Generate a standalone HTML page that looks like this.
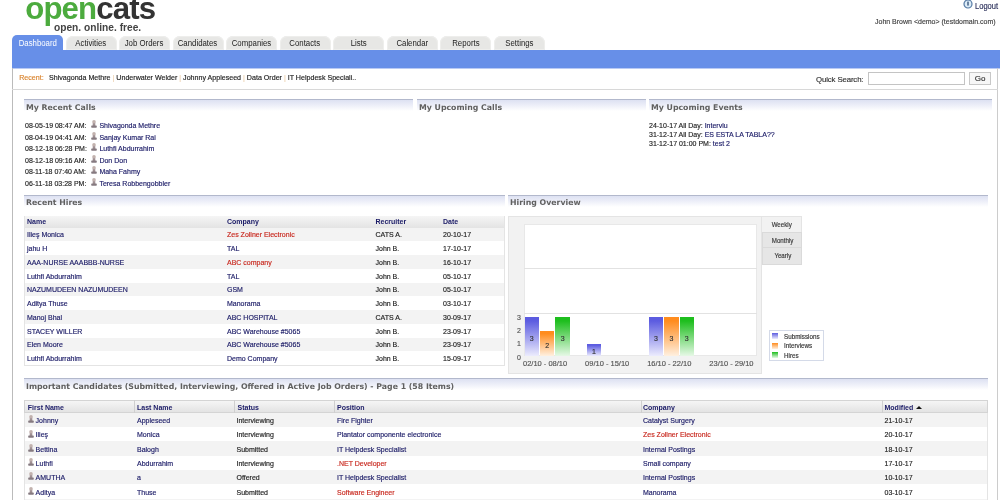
<!DOCTYPE html>
<html><head><meta charset="utf-8"><title>OpenCATS - Dashboard</title>
<style>
html,body{margin:0;padding:0;background:#fff;}
body{-webkit-text-stroke:.15px;will-change:transform;width:1000px;height:500px;overflow:hidden;position:relative;font-family:"Liberation Sans",sans-serif;font-size:7px;color:#222;}
.a{position:absolute;white-space:nowrap;}
.t{position:absolute;white-space:nowrap;line-height:10px;height:10px;}
#logo{left:25.2px;top:-12.3px;font-size:31.2px;font-weight:bold;letter-spacing:-0.85px;line-height:42px;color:#333;}
#logo b{color:#4cab3e;}
#logo,#tag,.sec span,.hd,.tab{-webkit-text-stroke:0;}
#tag{left:54px;top:21.5px;font-size:10.2px;font-weight:bold;line-height:12px;color:#444;}
#logout{left:975.2px;top:0.9px;font-size:8.6px;color:#2a2f5a;transform:scaleX(.88);transform-origin:0 0;}
#user{left:875px;top:16.6px;font-size:7px;color:#444;}
.tab{position:absolute;top:35.5px;height:14.5px;width:51px;background:#e7e7e5;border-radius:7px 7px 0 0;text-align:center;line-height:15.6px;font-size:8.5px;color:#222;box-shadow:inset 0 0 0 1px #eeeeec;}
.tab.on{background:#678fe8;color:#fff;box-shadow:none;top:35px;height:16px;line-height:16.6px;border-radius:5px 5px 0 0;}
.tab span{display:inline-block;transform:scaleX(.92);}
#bar{left:12px;top:49.5px;width:988px;height:18.5px;background:#678fe8;border-bottom:1px solid #b9caf4;}
#box{left:12px;top:68px;width:986px;height:440px;border-left:1px solid #bbb;border-right:1px solid #ccc;box-sizing:border-box;}
#recent{left:12px;top:68px;width:986px;height:22px;border-bottom:1px solid #d8d8d8;box-sizing:border-box;}
.sec{position:absolute;height:13px;border-top:1px solid #b2b8cc;background:linear-gradient(#dde1f2,#eceef8 5px,#fff 11px);}
.sec span{position:absolute;left:2px;top:2.2px;font-family:"DejaVu Sans",sans-serif;font-weight:bold;font-size:7.8px;line-height:12px;color:#606060;white-space:nowrap;}
a,.l{color:#1a1a66;text-decoration:none;}
.r{color:#c8281e;}
.sp{font-style:normal;color:#ecd0b0;}
.ic{display:block;}
.th{background:linear-gradient(#f5f5f5,#e3e3e3);}
.hd{font-weight:bold;color:#1a1a66;}
.odd{background:#f3f3f3;}
.ct{text-align:center;font-size:7.2px;line-height:15px;color:#333;}
.ct span{display:inline-block;transform:scaleX(.86);}
.bar{text-align:center;}
.bar span{position:absolute;left:0;right:0;top:50%;margin-top:-2.8px;line-height:10px;font-size:7px;color:#333;}
.cx{font-size:7.5px;color:#555;}
.cy{font-size:7px;color:#555;width:9px;text-align:right;}
.cl{font-size:6.6px;color:#333;transform:scaleX(.95);transform-origin:0 50%;}
</style></head><body>
<div class="a" id="logo"><b>open</b>cats</div>
<div class="a" id="tag">open. online. free.</div>
<svg class="a" style="left:962.6px;top:-1px" width="10" height="10" viewBox="0 0 10 10"><circle cx="5" cy="5" r="4" fill="#dcecf8" stroke="#557aa4" stroke-width="1.2"/><rect x="4.35" y="2.6" width="1.3" height="4" fill="#2a4a70"/></svg>
<div class="t" id="logout">Logout</div>
<div class="t" id="user">John Brown &lt;demo&gt; (testdomain.com)</div>
<div class="a" id="bar"></div>
<div class="tab on" style="left:12.0px"><span>Dashboard</span></div>
<div class="tab" style="left:65.5px"><span>Activities</span></div>
<div class="tab" style="left:119.0px"><span>Job Orders</span></div>
<div class="tab" style="left:172.5px"><span>Candidates</span></div>
<div class="tab" style="left:226.0px"><span>Companies</span></div>
<div class="tab" style="left:279.5px"><span>Contacts</span></div>
<div class="tab" style="left:333.0px"><span>Lists</span></div>
<div class="tab" style="left:386.5px"><span>Calendar</span></div>
<div class="tab" style="left:440.0px"><span>Reports</span></div>
<div class="tab" style="left:493.5px"><span>Settings</span></div>
<div class="a" id="box"></div>
<div class="a" id="recent"></div>
<div class="sec" style="left:24px;top:99px;width:389px"><span>My Recent Calls</span></div>
<div class="sec" style="left:417px;top:99px;width:229px"><span>My Upcoming Calls</span></div>
<div class="sec" style="left:649px;top:99px;width:343px"><span>My Upcoming Events</span></div>
<div class="sec" style="left:24px;top:194.6px;width:481px"><span style="top:1.7px">Recent Hires</span></div>
<div class="sec" style="left:508px;top:194.6px;width:480px"><span style="top:1.7px">Hiring Overview</span></div>
<div class="sec" style="left:24px;top:377.6px;width:964px"><span>Important Candidates (Submitted, Interviewing, Offered in Active Job Orders) - Page 1 (58 Items)</span></div>
<div class="t" style="left:19.2px;top:69.6px;font-size:7.1px;line-height:16px;height:16px"><span style="color:#d9822b">Recent:</span>&nbsp;&thinsp; Shivagonda Methre <i class="sp">|</i> Underwater Welder <i class="sp">|</i> Johnny Appleseed <i class="sp">|</i> Data Order <i class="sp">|</i> IT Helpdesk Speciali..</div>
<div class="t" style="left:816px;top:74.6px;font-size:7.8px;letter-spacing:-.12px;color:#333">Quick Search:</div>
<div class="a" style="left:868px;top:72px;width:97px;height:13px;box-sizing:border-box;border:1px solid #c4c4c4;background:#fff"></div>
<div class="a" style="left:969px;top:72px;width:22px;height:13px;box-sizing:border-box;border:1px solid #c8c8c8;background:#f7f7f7;text-align:center;font-size:8px;line-height:11px;color:#333">Go</div>
<div class="t" style="left:25px;top:121.00px">08-05-19 08:47 AM:</div>
<div class="a" style="left:91px;top:120.20px"><svg class="ic" width="6" height="8" viewBox="0 0 6 8"><circle cx="3" cy="1.9" r="1.8" fill="#c2b2ae"/><rect x="1.7" y="3.2" width="2.6" height="2.8" fill="#a09092"/><rect x="0.2" y="5.6" width="5.6" height="2.1" rx=".7" fill="#857a80"/></svg></div>
<div class="t l" style="left:99.4px;top:121.00px">Shivagonda Methre</div>
<div class="t" style="left:25px;top:132.52px">08-04-19 04:41 AM:</div>
<div class="a" style="left:91px;top:131.72px"><svg class="ic" width="6" height="8" viewBox="0 0 6 8"><circle cx="3" cy="1.9" r="1.8" fill="#c2b2ae"/><rect x="1.7" y="3.2" width="2.6" height="2.8" fill="#a09092"/><rect x="0.2" y="5.6" width="5.6" height="2.1" rx=".7" fill="#857a80"/></svg></div>
<div class="t l" style="left:99.4px;top:132.52px">Sanjay Kumar Rai</div>
<div class="t" style="left:25px;top:144.04px">08-12-18 06:28 PM:</div>
<div class="a" style="left:91px;top:143.24px"><svg class="ic" width="6" height="8" viewBox="0 0 6 8"><circle cx="3" cy="1.9" r="1.8" fill="#c2b2ae"/><rect x="1.7" y="3.2" width="2.6" height="2.8" fill="#a09092"/><rect x="0.2" y="5.6" width="5.6" height="2.1" rx=".7" fill="#857a80"/></svg></div>
<div class="t l" style="left:99.4px;top:144.04px">Luthfi Abdurrahim</div>
<div class="t" style="left:25px;top:155.56px">08-12-18 09:16 AM:</div>
<div class="a" style="left:91px;top:154.76px"><svg class="ic" width="6" height="8" viewBox="0 0 6 8"><circle cx="3" cy="1.9" r="1.8" fill="#c2b2ae"/><rect x="1.7" y="3.2" width="2.6" height="2.8" fill="#a09092"/><rect x="0.2" y="5.6" width="5.6" height="2.1" rx=".7" fill="#857a80"/></svg></div>
<div class="t l" style="left:99.4px;top:155.56px">Don Don</div>
<div class="t" style="left:25px;top:167.08px">08-11-18 07:40 AM:</div>
<div class="a" style="left:91px;top:166.28px"><svg class="ic" width="6" height="8" viewBox="0 0 6 8"><circle cx="3" cy="1.9" r="1.8" fill="#c2b2ae"/><rect x="1.7" y="3.2" width="2.6" height="2.8" fill="#a09092"/><rect x="0.2" y="5.6" width="5.6" height="2.1" rx=".7" fill="#857a80"/></svg></div>
<div class="t l" style="left:99.4px;top:167.08px">Maha Fahmy</div>
<div class="t" style="left:25px;top:178.60px">06-11-18 03:28 PM:</div>
<div class="a" style="left:91px;top:177.80px"><svg class="ic" width="6" height="8" viewBox="0 0 6 8"><circle cx="3" cy="1.9" r="1.8" fill="#c2b2ae"/><rect x="1.7" y="3.2" width="2.6" height="2.8" fill="#a09092"/><rect x="0.2" y="5.6" width="5.6" height="2.1" rx=".7" fill="#857a80"/></svg></div>
<div class="t l" style="left:99.4px;top:178.60px">Teresa Robbengobbler</div>
<div class="t" style="left:649px;top:121.00px">24-10-17 All Day: <span class="l">Interviu</span></div>
<div class="t" style="left:649px;top:130.20px">31-12-17 All Day: <span class="l">ES ESTA LA TABLA??</span></div>
<div class="t" style="left:649px;top:139.40px">31-12-17 01:00 PM: <span class="l">test 2</span></div>
<div class="a th" style="left:24px;top:215.5px;width:481px;height:12px"></div>
<div class="t hd" style="left:27px;top:217.00px">Name</div>
<div class="t hd" style="left:227px;top:217.00px">Company</div>
<div class="t hd" style="left:375.5px;top:217.00px">Recruiter</div>
<div class="t hd" style="left:443px;top:217.00px">Date</div>
<div class="a odd" style="left:24px;top:227.50px;width:481px;height:13.75px"></div>
<div class="t l" style="left:27px;top:230.30px">Ilieş Monica</div>
<div class="t r" style="left:227px;top:230.30px">Zes Zollner Electronic</div>
<div class="t" style="left:375.5px;top:230.30px">CATS A.</div>
<div class="t" style="left:443px;top:230.30px">20-10-17</div>
<div class="t l" style="left:27px;top:244.05px">jahu H</div>
<div class="t l" style="left:227px;top:244.05px">TAL</div>
<div class="t" style="left:375.5px;top:244.05px">John B.</div>
<div class="t" style="left:443px;top:244.05px">17-10-17</div>
<div class="a odd" style="left:24px;top:255.00px;width:481px;height:13.75px"></div>
<div class="t l" style="left:27px;top:257.80px">AAA-NURSE AAABBB-NURSE</div>
<div class="t r" style="left:227px;top:257.80px">ABC company</div>
<div class="t" style="left:375.5px;top:257.80px">John B.</div>
<div class="t" style="left:443px;top:257.80px">16-10-17</div>
<div class="t l" style="left:27px;top:271.55px">Luthfi Abdurrahim</div>
<div class="t l" style="left:227px;top:271.55px">TAL</div>
<div class="t" style="left:375.5px;top:271.55px">John B.</div>
<div class="t" style="left:443px;top:271.55px">05-10-17</div>
<div class="a odd" style="left:24px;top:282.50px;width:481px;height:13.75px"></div>
<div class="t l" style="left:27px;top:285.30px">NAZUMUDEEN NAZUMUDEEN</div>
<div class="t l" style="left:227px;top:285.30px">GSM</div>
<div class="t" style="left:375.5px;top:285.30px">John B.</div>
<div class="t" style="left:443px;top:285.30px">05-10-17</div>
<div class="t l" style="left:27px;top:299.05px">Aditya Thuse</div>
<div class="t l" style="left:227px;top:299.05px">Manorama</div>
<div class="t" style="left:375.5px;top:299.05px">John B.</div>
<div class="t" style="left:443px;top:299.05px">03-10-17</div>
<div class="a odd" style="left:24px;top:310.00px;width:481px;height:13.75px"></div>
<div class="t l" style="left:27px;top:312.80px">Manoj Bhal</div>
<div class="t l" style="left:227px;top:312.80px">ABC HOSPITAL</div>
<div class="t" style="left:375.5px;top:312.80px">CATS A.</div>
<div class="t" style="left:443px;top:312.80px">30-09-17</div>
<div class="t l" style="left:27px;top:326.55px">STACEY WILLER</div>
<div class="t l" style="left:227px;top:326.55px">ABC Warehouse #5065</div>
<div class="t" style="left:375.5px;top:326.55px">John B.</div>
<div class="t" style="left:443px;top:326.55px">23-09-17</div>
<div class="a odd" style="left:24px;top:337.50px;width:481px;height:13.75px"></div>
<div class="t l" style="left:27px;top:340.30px">Elen Moore</div>
<div class="t l" style="left:227px;top:340.30px">ABC Warehouse #5065</div>
<div class="t" style="left:375.5px;top:340.30px">John B.</div>
<div class="t" style="left:443px;top:340.30px">23-09-17</div>
<div class="t l" style="left:27px;top:354.05px">Luthfi Abdurrahim</div>
<div class="t l" style="left:227px;top:354.05px">Demo Company</div>
<div class="t" style="left:375.5px;top:354.05px">John B.</div>
<div class="t" style="left:443px;top:354.05px">15-09-17</div>
<div class="a" style="left:24px;top:215.5px;width:481px;height:150px;box-sizing:border-box;border:1px solid #e4e4e4;border-top:0"></div>
<div class="a th" style="left:24px;top:400px;width:964px;height:13px;box-sizing:border-box;border:1px solid #d4d4d4"></div>
<div class="t hd" style="left:27.8px;top:402.50px">First Name</div>
<div class="t hd" style="left:137px;top:402.50px">Last Name</div>
<div class="t hd" style="left:237.5px;top:402.50px">Status</div>
<div class="t hd" style="left:337px;top:402.50px">Position</div>
<div class="t hd" style="left:643px;top:402.50px">Company</div>
<div class="t hd" style="left:884.5px;top:402.50px">Modified</div>
<div class="a" style="left:134px;top:400px;width:1px;height:13px;background:#cfcfcf"></div>
<div class="a" style="left:234px;top:400px;width:1px;height:13px;background:#cfcfcf"></div>
<div class="a" style="left:334px;top:400px;width:1px;height:13px;background:#cfcfcf"></div>
<div class="a" style="left:640.5px;top:400px;width:1px;height:13px;background:#cfcfcf"></div>
<div class="a" style="left:881.5px;top:400px;width:1px;height:13px;background:#cfcfcf"></div>
<div class="a" style="left:915.5px;top:405.8px;width:0;height:0;border-left:3.1px solid transparent;border-right:3.1px solid transparent;border-bottom:3.6px solid #111"></div>
<div class="a odd" style="left:24px;top:412.80px;width:964px;height:14.3px"></div>
<div class="a" style="left:28px;top:415.20px"><svg class="ic" width="6" height="8" viewBox="0 0 6 8"><circle cx="3" cy="1.9" r="1.8" fill="#c2b2ae"/><rect x="1.7" y="3.2" width="2.6" height="2.8" fill="#a09092"/><rect x="0.2" y="5.6" width="5.6" height="2.1" rx=".7" fill="#857a80"/></svg></div>
<div class="t l" style="left:35.6px;top:416.00px">Johnny</div>
<div class="t l" style="left:137px;top:416.00px">Appleseed</div>
<div class="t" style="left:236.5px;top:416.00px">Interviewing</div>
<div class="t l" style="left:337px;top:416.00px">Fire Fighter</div>
<div class="t l" style="left:643px;top:416.00px">Catalyst Surgery</div>
<div class="t" style="left:884.5px;top:416.00px">21-10-17</div>
<div class="a" style="left:28px;top:429.50px"><svg class="ic" width="6" height="8" viewBox="0 0 6 8"><circle cx="3" cy="1.9" r="1.8" fill="#c2b2ae"/><rect x="1.7" y="3.2" width="2.6" height="2.8" fill="#a09092"/><rect x="0.2" y="5.6" width="5.6" height="2.1" rx=".7" fill="#857a80"/></svg></div>
<div class="t l" style="left:35.6px;top:430.30px">Ilieş</div>
<div class="t l" style="left:137px;top:430.30px">Monica</div>
<div class="t" style="left:236.5px;top:430.30px">Interviewing</div>
<div class="t l" style="left:337px;top:430.30px">Plantator componente electronice</div>
<div class="t r" style="left:643px;top:430.30px">Zes Zollner Electronic</div>
<div class="t" style="left:884.5px;top:430.30px">20-10-17</div>
<div class="a odd" style="left:24px;top:441.40px;width:964px;height:14.3px"></div>
<div class="a" style="left:28px;top:443.80px"><svg class="ic" width="6" height="8" viewBox="0 0 6 8"><circle cx="3" cy="1.9" r="1.8" fill="#c2b2ae"/><rect x="1.7" y="3.2" width="2.6" height="2.8" fill="#a09092"/><rect x="0.2" y="5.6" width="5.6" height="2.1" rx=".7" fill="#857a80"/></svg></div>
<div class="t l" style="left:35.6px;top:444.60px">Bettina</div>
<div class="t l" style="left:137px;top:444.60px">Balogh</div>
<div class="t" style="left:236.5px;top:444.60px">Submitted</div>
<div class="t l" style="left:337px;top:444.60px">IT Helpdesk Specialist</div>
<div class="t l" style="left:643px;top:444.60px">Internal Postings</div>
<div class="t" style="left:884.5px;top:444.60px">18-10-17</div>
<div class="a" style="left:28px;top:458.10px"><svg class="ic" width="6" height="8" viewBox="0 0 6 8"><circle cx="3" cy="1.9" r="1.8" fill="#c2b2ae"/><rect x="1.7" y="3.2" width="2.6" height="2.8" fill="#a09092"/><rect x="0.2" y="5.6" width="5.6" height="2.1" rx=".7" fill="#857a80"/></svg></div>
<div class="t l" style="left:35.6px;top:458.90px">Luthfi</div>
<div class="t l" style="left:137px;top:458.90px">Abdurrahim</div>
<div class="t" style="left:236.5px;top:458.90px">Interviewing</div>
<div class="t r" style="left:337px;top:458.90px">.NET Developer</div>
<div class="t l" style="left:643px;top:458.90px">Small company</div>
<div class="t" style="left:884.5px;top:458.90px">17-10-17</div>
<div class="a odd" style="left:24px;top:470.00px;width:964px;height:14.3px"></div>
<div class="a" style="left:28px;top:472.40px"><svg class="ic" width="6" height="8" viewBox="0 0 6 8"><circle cx="3" cy="1.9" r="1.8" fill="#c2b2ae"/><rect x="1.7" y="3.2" width="2.6" height="2.8" fill="#a09092"/><rect x="0.2" y="5.6" width="5.6" height="2.1" rx=".7" fill="#857a80"/></svg></div>
<div class="t l" style="left:35.6px;top:473.20px">AMUTHA</div>
<div class="t l" style="left:137px;top:473.20px">a</div>
<div class="t" style="left:236.5px;top:473.20px">Offered</div>
<div class="t l" style="left:337px;top:473.20px">IT Helpdesk Specialist</div>
<div class="t l" style="left:643px;top:473.20px">Internal Postings</div>
<div class="t" style="left:884.5px;top:473.20px">10-10-17</div>
<div class="a" style="left:28px;top:486.70px"><svg class="ic" width="6" height="8" viewBox="0 0 6 8"><circle cx="3" cy="1.9" r="1.8" fill="#c2b2ae"/><rect x="1.7" y="3.2" width="2.6" height="2.8" fill="#a09092"/><rect x="0.2" y="5.6" width="5.6" height="2.1" rx=".7" fill="#857a80"/></svg></div>
<div class="t l" style="left:35.6px;top:487.50px">Aditya</div>
<div class="t l" style="left:137px;top:487.50px">Thuse</div>
<div class="t" style="left:236.5px;top:487.50px">Submitted</div>
<div class="t r" style="left:337px;top:487.50px">Software Engineer</div>
<div class="t l" style="left:643px;top:487.50px">Manorama</div>
<div class="t" style="left:884.5px;top:487.50px">03-10-17</div>
<div class="a odd" style="left:24px;top:498.6px;width:964px;height:14.3px"></div>
<div class="a" style="left:24px;top:413px;width:964px;height:100px;box-sizing:border-box;border-left:1px solid #e4e4e4;border-right:1px solid #e4e4e4"></div>
<div class="a" style="left:507.6px;top:215.6px;width:254.8px;height:158px;box-sizing:border-box;background:#f2f2f2;border:1px solid #e4e4e4"></div>
<div class="a" style="left:524.4px;top:223.6px;width:232.2px;height:132.4px;background:#fff;box-sizing:border-box;border:1px solid #e8e8e8"></div>
<div class="a" style="left:524.4px;top:268px;width:232.2px;height:1px;background:#e2e2e2"></div>
<div class="a" style="left:524.4px;top:313px;width:232.2px;height:1px;background:#e2e2e2"></div>
<div class="a ct" style="left:762.4px;top:215.6px;width:40px;height:16.4px;background:#f2f2f2;border:1px solid #e4e4e4;border-left:0;border-bottom:0;box-sizing:border-box"><span>Weekly</span></div>
<div class="a ct" style="left:762.4px;top:232px;width:40px;height:16.4px;background:#e6e6e6;border:1px solid #dadada;box-sizing:border-box"><span>Monthly</span></div>
<div class="a ct" style="left:762.4px;top:248.4px;width:40px;height:16.2px;background:#e6e6e6;border:1px solid #dadada;border-top:0;box-sizing:border-box;line-height:16.5px"><span>Yearly</span></div>
<div class="a bar" style="left:524.5px;top:317.2px;width:14.6px;height:38.8px;background:linear-gradient(#5c5ce0,#5c5ce0 10%,#ececfd)"><span>3</span></div>
<div class="a bar" style="left:539.9px;top:330.8px;width:14.6px;height:25.2px;background:linear-gradient(#ff8c1e,#ff8c1e 10%,#fff0e0)"><span>2</span></div>
<div class="a bar" style="left:555.3px;top:317.2px;width:14.6px;height:38.8px;background:linear-gradient(#1ebe1e,#1ebe1e 10%,#e6f8e6)"><span>3</span></div>
<div class="t cx" style="left:523.0px;top:358.5px">02/10 - 08/10</div>
<div class="a bar" style="left:586.6px;top:343.8px;width:14.6px;height:12.2px;background:linear-gradient(#5c5ce0,#5c5ce0 10%,#ececfd)"><span>1</span></div>
<div class="t cx" style="left:585.1px;top:358.5px">09/10 - 15/10</div>
<div class="a bar" style="left:648.7px;top:317.2px;width:14.6px;height:38.8px;background:linear-gradient(#5c5ce0,#5c5ce0 10%,#ececfd)"><span>3</span></div>
<div class="a bar" style="left:664.1px;top:317.2px;width:14.6px;height:38.8px;background:linear-gradient(#ff8c1e,#ff8c1e 10%,#fff0e0)"><span>3</span></div>
<div class="a bar" style="left:679.5px;top:317.2px;width:14.6px;height:38.8px;background:linear-gradient(#1ebe1e,#1ebe1e 10%,#e6f8e6)"><span>3</span></div>
<div class="t cx" style="left:647.2px;top:358.5px">16/10 - 22/10</div>
<div class="t cx" style="left:709.3px;top:358.5px">23/10 - 29/10</div>
<div class="t cy" style="left:512px;top:312.7px">3</div>
<div class="t cy" style="left:512px;top:325.7px">2</div>
<div class="t cy" style="left:512px;top:339.2px">1</div>
<div class="t cy" style="left:512px;top:352.7px">0</div>
<div class="a" style="left:769.4px;top:330px;width:54.4px;height:30.6px;box-sizing:border-box;border:1px solid #d4dae8;background:#fff"></div>
<div class="a" style="left:771.6px;top:333.0px;width:6.4px;height:6.2px;background:linear-gradient(#5c5ce0,#ececfd)"></div>
<div class="t cl" style="left:783.6px;top:331.8px">Submissions</div>
<div class="a" style="left:771.6px;top:342.6px;width:6.4px;height:6.2px;background:linear-gradient(#ff8c1e,#fff0e0)"></div>
<div class="t cl" style="left:783.6px;top:341.4px">Interviews</div>
<div class="a" style="left:771.6px;top:352.2px;width:6.4px;height:6.2px;background:linear-gradient(#1ebe1e,#e6f8e6)"></div>
<div class="t cl" style="left:783.6px;top:351.0px">Hires</div>
</body></html>
